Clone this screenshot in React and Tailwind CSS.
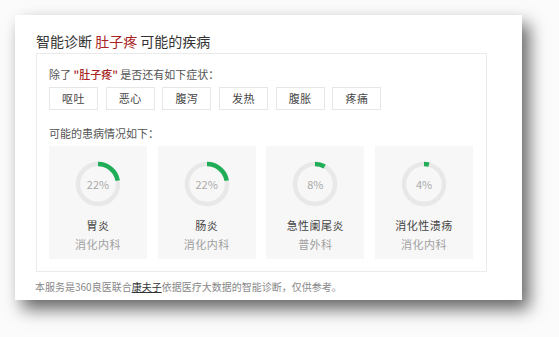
import React from "react";

const symptoms = ["呕吐", "恶心", "腹泻", "发热", "腹胀", "疼痛"];
const diseases = [
  { pct: 22, name: "胃炎", dept: "消化内科" },
  { pct: 22, name: "肠炎", dept: "消化内科" },
  { pct: 8, name: "急性阑尾炎", dept: "普外科" },
  { pct: 4, name: "消化性溃疡", dept: "消化内科" },
];

function Ring({ pct }) {
  const r = 20;
  const c = 2 * Math.PI * r;
  return (
    <div className="relative w-[46px] h-[46px]">
      <svg width="46" height="46" viewBox="0 0 46 46">
        <circle cx="23" cy="23" r={r} fill="none" stroke="#e8e8e8" strokeWidth="4.5" />
        <circle
          cx="23"
          cy="23"
          r={r}
          fill="none"
          stroke="#1fae57"
          strokeWidth="4.5"
          strokeDasharray={`${(c * pct) / 100} ${c}`}
          transform="rotate(-90 23 23)"
        />
      </svg>
      <div className="absolute inset-0 flex items-center justify-center text-[11px] text-[#aaa]">
        {pct}%
      </div>
    </div>
  );
}

export default function App() {
  return (
    <div
      className="w-[559px] h-[337px] bg-[#fbfbfb] pt-[15px] pl-[15px]"
      style={{ fontFamily: '"Noto Sans CJK SC", "Noto Sans", sans-serif' }}
    >
      <div className="w-[507px] h-[285px] bg-white shadow-[7px_9px_16px_rgba(0,0,0,0.6)] pl-[21px] pt-[16px]">
        <div className="text-[14px] leading-[20px] text-[#333]">
          智能诊断 <span className="text-[#a82323]">肚子疼</span> 可能的疾病
        </div>
        <div className="mt-[2px] w-[451px] h-[219px] border border-[#ebebeb] pl-[12px] pt-[11px]">
          <div className="text-[11px] leading-[18px] text-[#555]">
            除了 <span className="text-[#a82323] font-medium">"肚子疼"</span> 是否还有如下症状：
          </div>
          <div className="mt-[4px] flex gap-[7.7px]">
            {symptoms.map((s) => (
              <div
                key={s}
                className="w-[49px] h-[23px] border border-[#e6e6e6] flex items-center justify-center text-[11px] tracking-[0.5px] text-[#444]"
              >
                {s}
              </div>
            ))}
          </div>
          <div className="mt-[14px] text-[11px] leading-[18px] text-[#555]">可能的患病情况如下：</div>
          <div className="mt-[4px] flex gap-[10.7px]">
            {diseases.map((d) => (
              <div key={d.name} className="w-[98px] h-[113px] bg-[#f7f7f7] flex flex-col items-center pt-[15px]">
                <Ring pct={d.pct} />
                <div className="mt-[9px] text-[11px] leading-[18px] tracking-[0.5px] text-[#444]">{d.name}</div>
                <div className="mt-[1px] text-[11px] leading-[18px] tracking-[0.5px] text-[#a0a0a0]">{d.dept}</div>
              </div>
            ))}
          </div>
        </div>
        <div className="mt-[7px] -ml-[1px] text-[10px] leading-[16px] text-[#888]">
          本服务是360良医联合<span className="text-[#333] underline">康夫子</span>依据医疗大数据的智能诊断，仅供参考。
        </div>
      </div>
    </div>
  );
}
